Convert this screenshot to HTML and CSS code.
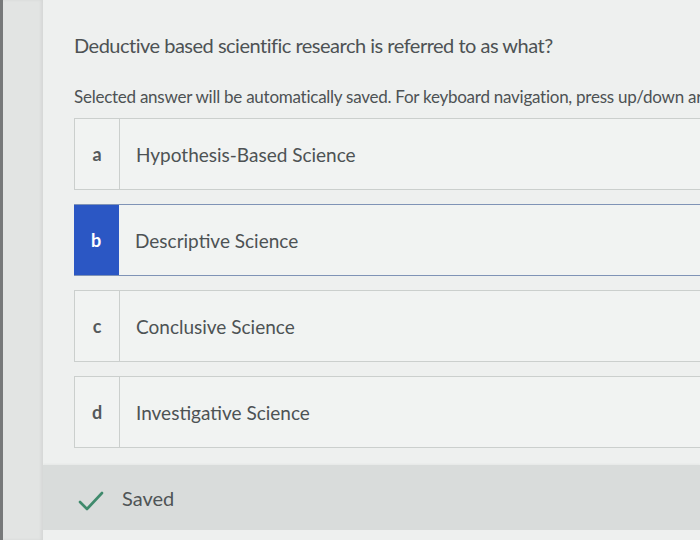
FILE: index.html
```html
<!DOCTYPE html>
<html lang="en">
<head>
  <meta charset="UTF-8" />
  <meta name="viewport" content="width=device-width, initial-scale=1.0" />
  <title>Question</title>
  <link rel="stylesheet" href="styles.css">
</head>

<body>
  <div class="rail"></div>

  <div class="page">
    <div class="main">
      <h1 class="question">Deductive based scientific research is referred to as what?</h1>
      <p class="hint">Selected answer will be automatically saved. For keyboard navigation, press up/down arrow keys to select an answer.</p>

      <div class="options">
        <div class="option">
          <span class="letter">a</span>
          <span class="label">Hypothesis-Based Science</span>
        </div>
        <div class="option selected">
          <span class="letter">b</span>
          <span class="label">Descriptive Science</span>
        </div>
        <div class="option">
          <span class="letter">c</span>
          <span class="label">Conclusive Science</span>
        </div>
        <div class="option">
          <span class="letter">d</span>
          <span class="label">Investigative Science</span>
        </div>
      </div>
    </div>

    <div class="status">
      <svg class="check" width="26" height="20" viewBox="0 0 26 20">
        <path d="M2 11 L9 18 L24 2" fill="none" stroke="#3f8a6c" stroke-width="2.6" stroke-linecap="round" stroke-linejoin="round" />
      </svg>
      <span>Saved</span>
    </div>
  </div>
</body>
</html>
```

FILE: styles.css
```css
* {
  box-sizing: border-box;
  font-family: Lato, 'Noto Sans', sans-serif;
}

body {
  margin: 0;
  height: 540px;
  overflow: hidden;
  display: flex;
  background-color: #e3e5e4;
  color: #4d5254;
}

.rail {
  width: 43px;
  flex-shrink: 0;
  border-left: 3px solid #77797a;
  background-color: #e2e4e3;
  box-shadow: inset -2px 0 3px rgba(0, 0, 0, 0.06);
}

.page {
  flex: 1;
  display: flex;
  flex-direction: column;
  background-color: #eef0ef;
  overflow: hidden;
}

.main {
  flex: 1;
  padding: 0 0 0 31px;
}

.question {
  font-size: 20px;
  font-weight: 400;
  letter-spacing: -0.5px;
  margin: 32px 0 0;
  line-height: 26px;
}

.hint {
  font-size: 17px;
  letter-spacing: -0.25px;
  margin: 28px 0 0;
  line-height: 22px;
  white-space: nowrap;
}

.options {
  display: flex;
  flex-direction: column;
  gap: 14px;
  margin-top: 10px;
  margin-right: -10px;
}

.option {
  display: flex;
  align-items: center;
  height: 72px;
  border: 1px solid #cbcfcd;
  background-color: #f1f3f2;
}

.letter {
  width: 45px;
  height: 100%;
  display: flex;
  align-items: center;
  justify-content: center;
  border-right: 1px solid #cbcfcd;
  font-size: 18px;
  font-weight: 700;
  color: #55595b;
}

.label {
  padding-left: 16px;
  font-size: 19px;
}

.option.selected {
  border-color: #7f93b6;
  border-left: none;
}

.option.selected .letter {
  background-color: #2b57c4;
  border-right-color: #2b57c4;
  color: #ffffff;
}

.status {
  height: 65px;
  margin-bottom: 10px;
  display: flex;
  align-items: center;
  gap: 18px;
  padding-left: 35px;
  background-color: #d9dcdb;
  box-shadow: 0 -1px 2px rgba(0, 0, 0, 0.04);
  font-size: 20px;
  color: #4f5456;
}

.check {
  margin-top: 6px;
}
```
